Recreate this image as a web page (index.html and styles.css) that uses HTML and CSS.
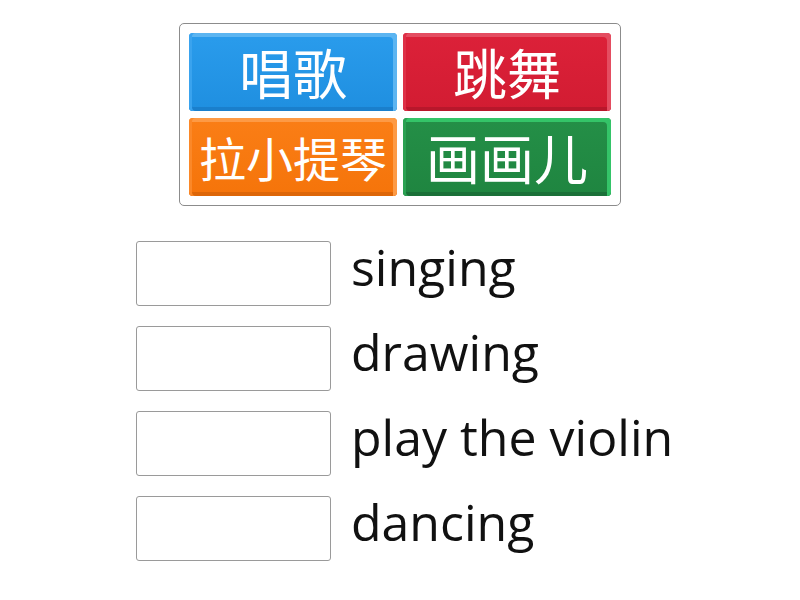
FILE: index.html
```html
<!DOCTYPE html>
<html lang="zh">
<head>
  <meta charset="UTF-8">
  <title>Match up</title>
  <link rel="stylesheet" href="styles.css">
</head>
<body>
  <!-- answer tiles -->
  <div class="tiles">
    <div class="tile blue">唱歌</div>
    <div class="tile red">跳舞</div>
    <div class="tile orange small">拉小提琴</div>
    <div class="tile green">画画儿</div>
  </div>

  <!-- drop targets -->
  <div class="rows">
    <div class="row"><div class="slot"></div><span class="word">singing</span></div>
    <div class="row"><div class="slot"></div><span class="word">drawing</span></div>
    <div class="row"><div class="slot"></div><span class="word">play the violin</span></div>
    <div class="row"><div class="slot"></div><span class="word">dancing</span></div>
  </div>
</body>
</html>
```
FILE: styles.css
```css
* {
  margin: 0;
  padding: 0;
  box-sizing: border-box;
}

body {
  background: #fff;
  font-family: 'Open Sans', 'Noto Sans CJK SC', sans-serif;
}

.tiles {
  width: 442px;
  margin: 23px auto 0;
  padding: 9px;
  border: 1px solid #8c8c8c;
  border-radius: 5px;
  display: grid;
  grid-template-columns: 208px 208px;
  gap: 7px 6px;
}

.tile {
  height: 78px;
  border-radius: 4px;
  color: #fff;
  font-family: 'Noto Sans CJK SC', sans-serif;
  font-size: 54px;
  line-height: 78px;
  text-align: center;
  white-space: nowrap;
  overflow: hidden;
}

.tile.small {
  font-size: 47px;
}

.blue {
  background: linear-gradient(#2a9cec, #1f8fe0);
  box-shadow: inset 3px 0 0 #3aa3ee, inset -4px 4px 0 #5cb5f1, inset 0 -4px 0 #1a7fcc;
}

.red {
  background: linear-gradient(#dc2139, #d21c32);
  box-shadow: inset 3px 0 0 #de3047, inset -4px 4px 0 #e44d61, inset 0 -4px 0 #b8172b;
}

.orange {
  background: linear-gradient(#fa7e16, #f5740a);
  box-shadow: inset 3px 0 0 #fb8828, inset -4px 4px 0 #fd9a45, inset 0 -4px 0 #dd6608;
}

.green {
  background: linear-gradient(#248f47, #1f8540);
  box-shadow: inset 3px 0 0 #2aa152, inset -4px 4px 0 #34c468, inset 0 -4px 0 #1a7038;
}

.rows {
  margin: 35px 0 0 136px;
  display: flex;
  flex-direction: column;
  gap: 20px;
}

.row {
  display: flex;
  align-items: flex-start;
  gap: 20px;
}

.slot {
  width: 195px;
  height: 65px;
  border: 1px solid #9a9a9a;
  border-radius: 3px;
  background: #fff;
}

.word {
  font-size: 50px;
  color: #111;
  line-height: 53px;
}
```
